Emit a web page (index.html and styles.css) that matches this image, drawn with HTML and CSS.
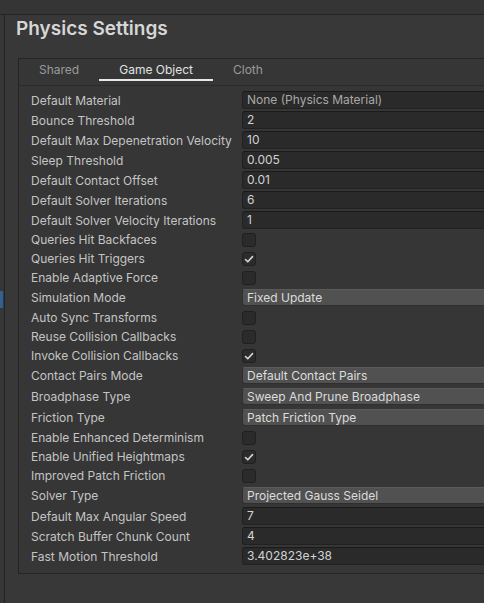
FILE: index.html
```html
<!DOCTYPE html>
<html>
<head>
<meta charset="utf-8">
<link rel="stylesheet" href="styles.css">
</head>
<body>
<div class="topbar"></div>
<div class="main">
  <div class="strip"><div class="marker"></div></div>
  <div class="content">
    <h1 class="title">Physics Settings</h1>
    <div class="panel">
      <div class="tabs">
        <div class="tab">Shared</div>
        <div class="tab active">Game Object</div>
        <div class="tab">Cloth</div>
      </div>
      <div class="rows">
        <div class="row r-field"><span class="label">Default Material</span><span class="field dim">None (Physics Material)</span></div>
        <div class="row r-field"><span class="label">Bounce Threshold</span><span class="field">2</span></div>
        <div class="row r-field"><span class="label">Default Max Depenetration Velocity</span><span class="field">10</span></div>
        <div class="row r-field"><span class="label">Sleep Threshold</span><span class="field">0.005</span></div>
        <div class="row r-field"><span class="label">Default Contact Offset</span><span class="field">0.01</span></div>
        <div class="row r-field"><span class="label">Default Solver Iterations</span><span class="field">6</span></div>
        <div class="row r-field"><span class="label">Default Solver Velocity Iterations</span><span class="field">1</span></div>
        <div class="row r-check"><span class="label">Queries Hit Backfaces</span><span class="check"></span></div>
        <div class="row r-check"><span class="label">Queries Hit Triggers</span><span class="check"><svg viewBox="0 0 14 14" width="14" height="14"><polyline points="3.5,7.5 5.8,9.8 10.5,4.6" fill="none" stroke="#d4d4d4" stroke-width="1.6" stroke-linecap="round" stroke-linejoin="round"/></svg></span></div>
        <div class="row r-check"><span class="label">Enable Adaptive Force</span><span class="check"></span></div>
        <div class="row r-drop"><span class="label">Simulation Mode</span><span class="drop">Fixed Update</span></div>
        <div class="row r-check"><span class="label">Auto Sync Transforms</span><span class="check"></span></div>
        <div class="row r-check"><span class="label">Reuse Collision Callbacks</span><span class="check"></span></div>
        <div class="row r-check"><span class="label">Invoke Collision Callbacks</span><span class="check"><svg viewBox="0 0 14 14" width="14" height="14"><polyline points="3.5,7.5 5.8,9.8 10.5,4.6" fill="none" stroke="#d4d4d4" stroke-width="1.6" stroke-linecap="round" stroke-linejoin="round"/></svg></span></div>
        <div class="row r-drop"><span class="label">Contact Pairs Mode</span><span class="drop">Default Contact Pairs</span></div>
        <div class="row r-drop"><span class="label">Broadphase Type</span><span class="drop">Sweep And Prune Broadphase</span></div>
        <div class="row r-drop"><span class="label">Friction Type</span><span class="drop">Patch Friction Type</span></div>
        <div class="row r-check"><span class="label">Enable Enhanced Determinism</span><span class="check"></span></div>
        <div class="row r-check"><span class="label">Enable Unified Heightmaps</span><span class="check"><svg viewBox="0 0 14 14" width="14" height="14"><polyline points="3.5,7.5 5.8,9.8 10.5,4.6" fill="none" stroke="#d4d4d4" stroke-width="1.6" stroke-linecap="round" stroke-linejoin="round"/></svg></span></div>
        <div class="row r-check"><span class="label">Improved Patch Friction</span><span class="check"></span></div>
        <div class="row r-drop"><span class="label">Solver Type</span><span class="drop">Projected Gauss Seidel</span></div>
        <div class="row r-field"><span class="label">Default Max Angular Speed</span><span class="field">7</span></div>
        <div class="row r-field"><span class="label">Scratch Buffer Chunk Count</span><span class="field">4</span></div>
        <div class="row r-field"><span class="label">Fast Motion Threshold</span><span class="field">3.402823e+38</span></div>
      </div>
    </div>
  </div>
</div>
</body>
</html>
```
FILE: styles.css
```css
* { box-sizing: border-box; }
html, body {
  margin: 0;
  padding: 0;
  width: 484px;
  height: 603px;
  overflow: hidden;
  background: #383838;
  font-family: Inter, "Noto Sans", "Liberation Sans", sans-serif;
  font-size: 12px;
  color: #c4c4c4;
}
.topbar {
  height: 15px;
  background: #353535;
  border-bottom: 1px solid #232323;
}
.main {
  display: flex;
  height: 588px;
}
.strip {
  width: 5px;
  flex: none;
  border-right: 1px solid #232323;
  background: #363636;
  padding-top: 276px;
}
.marker {
  width: 3px;
  height: 17px;
  background: #2f6194;
}
.content {
  flex: 1;
  min-width: 0;
  padding-left: 11px;
}
.title {
  margin: 2px 0 0 0;
  font-size: 19px;
  line-height: 23px;
  font-weight: 600;
  color: #d6d6d6;
  height: 23px;
}
.panel {
  margin-top: 18px;
  margin-left: 2px;
  border: 1px solid #252525;
  border-right: none;
  background: #363636;
  padding-bottom: 7px;
}
.tabs {
  display: flex;
  padding-bottom: 4px;
  border-bottom: 1px solid #2a2a2a;
}
.tab {
  padding: 1px 20px 0;
  line-height: 19px;
  border-bottom: 2px solid transparent;
  color: #9a9a9a;
}
.tab.active {
  color: #e2e2e2;
  border-bottom-color: #e8e8e8;
}
.rows {
  padding-top: 4px;
}
.row {
  display: flex;
  align-items: center;
  padding-left: 12px;
}
.r-field { height: 20px; }
.r-check { height: 19px; }
.r-drop { height: 21px; }
.label {
  width: 211px;
  flex: none;
  white-space: nowrap;
  color: #c4c4c4;
}
.field {
  flex: 1;
  height: 18px;
  line-height: 16px;
  padding-left: 4px;
  background: #2a2a2a;
  border: 1px solid #212121;
  border-top-color: #1a1a1a;
  border-right: none;
  border-radius: 3px 0 0 3px;
  color: #d2d2d2;
}
.field.dim { color: #a8a8a8; }
.check {
  width: 14px;
  height: 14px;
  flex: none;
  background: #2b2b2b;
  border: 1px solid #202020;
  border-radius: 3px;
  display: flex;
  align-items: center;
  justify-content: center;
}
.check svg { display: block; flex: none; }
.drop {
  flex: 1;
  height: 17px;
  line-height: 15px;
  padding-left: 4px;
  background: #515151;
  border: 1px solid #2f2f2f;
  border-top-color: #5a5a5a;
  border-right: none;
  border-radius: 3px 0 0 3px;
  color: #dcdcdc;
}
```
